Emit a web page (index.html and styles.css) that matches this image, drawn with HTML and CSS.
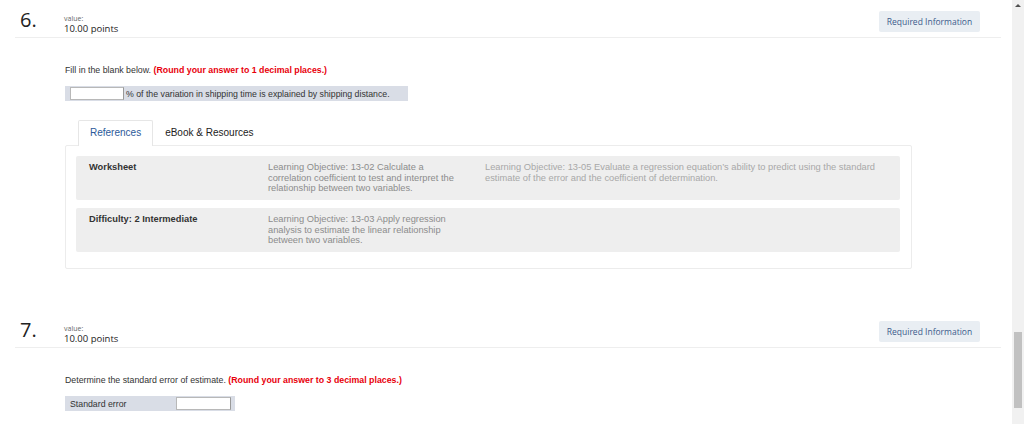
FILE: index.html
```html
<!DOCTYPE html>
<html>
<head>
<meta charset="utf-8">
<link rel="stylesheet" href="styles.css">
</head>
<body>
<div class="page">
  <section class="question q6">
    <div class="q-header">
      <div class="q-num">6.</div>
      <div class="q-value">
        <div class="value-label">value:</div>
        <div class="value-points">10.00 points</div>
      </div>
      <button class="req-btn">Required Information</button>
    </div>
    <div class="q-body">
      <p class="prompt">Fill in the blank below. <span class="hint">(Round your answer to 1 decimal places.)</span></p>
      <div class="answer-bar bar-wide">
        <span class="input-box box1"></span>
        <span class="bar-text">% of the variation in shipping time is explained by shipping distance.</span>
      </div>
      <div class="tabs">
        <div class="tab active">References</div>
        <div class="tab">eBook &amp; Resources</div>
      </div>
      <div class="panel">
        <div class="ref-row">
          <div class="ref-label">Worksheet</div>
          <div class="ref-lo">Learning Objective: 13-02 Calculate a correlation coefficient to test and interpret the relationship between two variables.</div>
          <div class="ref-lo2">Learning Objective: 13-05 Evaluate a regression equation’s ability to predict using the standard estimate of the error and the coefficient of determination.</div>
        </div>
        <div class="ref-row">
          <div class="ref-label">Difficulty: 2 Intermediate</div>
          <div class="ref-lo">Learning Objective: 13-03 Apply regression analysis to estimate the linear relationship between two variables.</div>
          <div class="ref-lo2"></div>
        </div>
      </div>
    </div>
  </section>
  <section class="question q7">
    <div class="q-header">
      <div class="q-num">7.</div>
      <div class="q-value">
        <div class="value-label">value:</div>
        <div class="value-points">10.00 points</div>
      </div>
      <button class="req-btn">Required Information</button>
    </div>
    <div class="q-body">
      <p class="prompt">Determine the standard error of estimate. <span class="hint">(Round your answer to 3 decimal places.)</span></p>
      <div class="answer-bar bar-small">
        <span class="bar-label">Standard error</span>
        <span class="input-box box2"></span>
      </div>
    </div>
  </section>
</div>
<div class="scrollbar">
  <div class="sb-arrow"></div>
  <div class="sb-thumb"></div>
</div>
</body>
</html>
```

FILE: styles.css
```css
html, body {
  margin: 0;
  padding: 0;
  background: #fff;
  overflow: hidden;
}
body {
  font-family: "Liberation Sans", Arial, sans-serif;
  color: #333;
  width: 1024px;
  height: 424px;
}
.page {
  width: 1012px;
}
.question {
  padding-left: 15px;
  padding-right: 11px;
}
.q7 {
  margin-top: 41px;
}
.q-header {
  display: flex;
  align-items: flex-start;
  border-bottom: 1px solid #eeeeee;
  box-sizing: border-box;
  height: 38px;
}
.q-num {
  font-family: "Open Sans", sans-serif;
  font-size: 20px;
  line-height: 20px;
  color: #222;
  padding-left: 5px;
  padding-top: 10px;
  box-sizing: border-box;
  width: 49px;
}
.q-value {
  font-family: "Open Sans", sans-serif;
  padding-top: 15px;
  flex: 1;
}
.value-label {
  font-size: 7px;
  line-height: 8px;
  color: #666;
}
.value-points {
  font-size: 9.5px;
  line-height: 12px;
  color: #222;
}
.req-btn {
  margin-top: 11px;
  margin-right: 21px;
  width: 101px;
  height: 21px;
  border: none;
  border-radius: 2px;
  background: #e9eef3;
  color: #3b5b8c;
  font-family: "Open Sans", sans-serif;
  font-size: 8.5px;
  padding: 0;
  cursor: pointer;
}
.q-body {
  padding-left: 50px;
}
.prompt {
  margin: 0;
  padding-top: 27px;
  font-size: 8.8px;
  line-height: 11px;
  color: #333;
}
.hint {
  color: #e8000b;
  font-weight: bold;
}
.answer-bar {
  display: flex;
  align-items: center;
  background: #d9dde6;
  height: 15px;
  margin-top: 10px;
  font-size: 8.75px;
  color: #333;
}
.bar-wide {
  width: 343px;
}
.bar-small {
  width: 170px;
}
.input-box {
  display: block;
  background: #fff;
  border: 1px solid #b8b8b8;
  border-right-color: #999;
  height: 11px;
  box-sizing: content-box;
}
.box1 {
  width: 52px;
  margin-left: 5px;
  margin-right: 2px;
}
.box2 {
  width: 53px;
  margin-left: auto;
  margin-right: 4px;
}
.bar-label {
  padding-left: 5px;
}
.tabs {
  display: flex;
  margin-top: 19px;
  margin-left: 13px;
  height: 25px;
  position: relative;
  z-index: 1;
}
.tab {
  font-size: 10px;
  line-height: 24px;
  color: #222;
  padding: 0 11px;
  border: 1px solid transparent;
  border-bottom: none;
  border-radius: 2px 2px 0 0;
}
.tab.active {
  color: #2c5a9a;
  border-color: #e6e6e6;
  background: #fff;
  height: 26px;
  box-sizing: border-box;
}
.panel {
  width: 847px;
  box-sizing: border-box;
  border: 1px solid #ececec;
  border-radius: 2px;
  padding: 10px 11px 16px 10px;
  display: flex;
  flex-direction: column;
  gap: 8px;
}
.ref-row {
  display: flex;
  background: #eeeeee;
  border-radius: 2px;
  height: 44px;
  padding: 6px 0 0 13px;
  box-sizing: border-box;
  font-size: 9.3px;
  line-height: 10.5px;
}
.ref-label {
  width: 179px;
  font-weight: bold;
  color: #333;
}
.ref-lo {
  width: 195px;
  margin-right: 22px;
  color: #8c8c8c;
}
.ref-lo2 {
  width: 410px;
  color: #a8a8a8;
}
.scrollbar {
  position: fixed;
  top: 0;
  right: 0;
  width: 12px;
  height: 424px;
  background: #f1f1f1;
}
.sb-arrow {
  position: absolute;
  top: 4px;
  left: 3px;
  width: 0;
  height: 0;
  border-left: 3px solid transparent;
  border-right: 3px solid transparent;
  border-bottom: 3px solid #505050;
}
.sb-thumb {
  position: absolute;
  top: 332px;
  left: 2px;
  width: 8px;
  height: 76px;
  background: #c1c1c1;
}
```
